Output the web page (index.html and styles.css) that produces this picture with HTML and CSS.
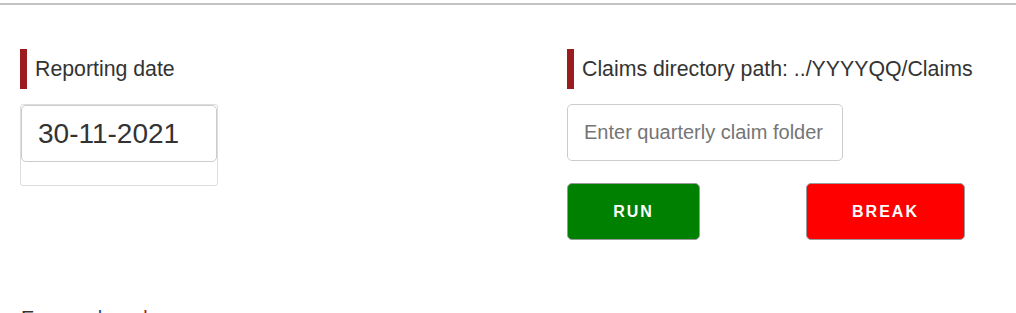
FILE: index.html
```html
<!DOCTYPE html>
<html>
<head>
<meta charset="utf-8">
<link rel="stylesheet" href="styles.css">
</head>
<body>
<div class="rule"></div>
<div class="main">
  <div class="col col-left">
    <div class="label">Reporting date</div>
    <div class="date-box">
      <input class="date-input" type="text" value="30-11-2021">
    </div>
  </div>
  <div class="col col-right">
    <div class="label">Claims directory path: ../YYYYQQ/Claims</div>
    <input class="path-input" type="text" placeholder="Enter quarterly claim folder">
    <div class="buttons">
      <button class="btn btn-run">RUN</button>
      <button class="btn btn-break">BREAK</button>
    </div>
  </div>
</div>
<div class="output">Errors a <span class="blue">bar</span> <span class="red">ok</span></div>
</body>
</html>
```
FILE: styles.css
```css
html, body {
  margin: 0;
  padding: 0;
  background: #ffffff;
  font-family: "Liberation Sans", Arial, sans-serif;
  color: #333333;
  overflow: hidden;
}

.rule {
  margin-top: 3px;
  height: 2px;
  background: #c3c3c3;
}

.main {
  display: flex;
  padding: 44px 20px 0 20px;
}

.col-left {
  width: 547px;
  flex: none;
}

.col-right {
  flex: 1;
}

.label {
  height: 40px;
  box-sizing: border-box;
  border-left: 7px solid #9b1b1f;
  padding-left: 8px;
  display: flex;
  align-items: center;
  font-size: 21.3px;
  color: #333333;
  white-space: nowrap;
}

.date-box {
  margin-top: 15px;
  width: 198px;
  height: 82px;
  box-sizing: border-box;
  border: 1px solid #dddddd;
  border-radius: 3px;
}

.date-input {
  display: block;
  width: 196px;
  height: 57px;
  box-sizing: border-box;
  margin: 0;
  border: 1px solid #cccccc;
  border-radius: 5px;
  padding: 0 0 0 16px;
  font-family: "Liberation Sans", Arial, sans-serif;
  font-size: 28px;
  color: #333333;
  background: #ffffff;
  outline: none;
}

.path-input {
  display: block;
  margin-top: 15px;
  width: 276px;
  height: 57px;
  box-sizing: border-box;
  border: 1px solid #cccccc;
  border-radius: 5px;
  padding: 0 0 0 16px;
  font-family: "Liberation Sans", Arial, sans-serif;
  font-size: 20px;
  color: #333333;
  background: #ffffff;
  outline: none;
}

.path-input::placeholder {
  color: #757575;
}

.buttons {
  display: flex;
  margin-top: 22px;
}

.btn {
  height: 57px;
  box-sizing: border-box;
  border: 1px solid #9a9a9a;
  border-radius: 5px;
  color: #ffffff;
  font-family: "Liberation Sans", Arial, sans-serif;
  font-weight: bold;
  font-size: 16px;
  letter-spacing: 2px;
  padding: 0;
  cursor: pointer;
}

.btn-run {
  width: 133px;
  background: #008000;
}

.btn-break {
  width: 159px;
  margin-left: 106px;
  background: #ff0000;
}

.output {
  margin-top: 66px;
  padding-left: 21px;
  font-size: 20px;
  line-height: 24px;
  color: #333333;
}

.blue {
  color: #2a3f9d;
}

.red {
  color: #b01020;
}
```
